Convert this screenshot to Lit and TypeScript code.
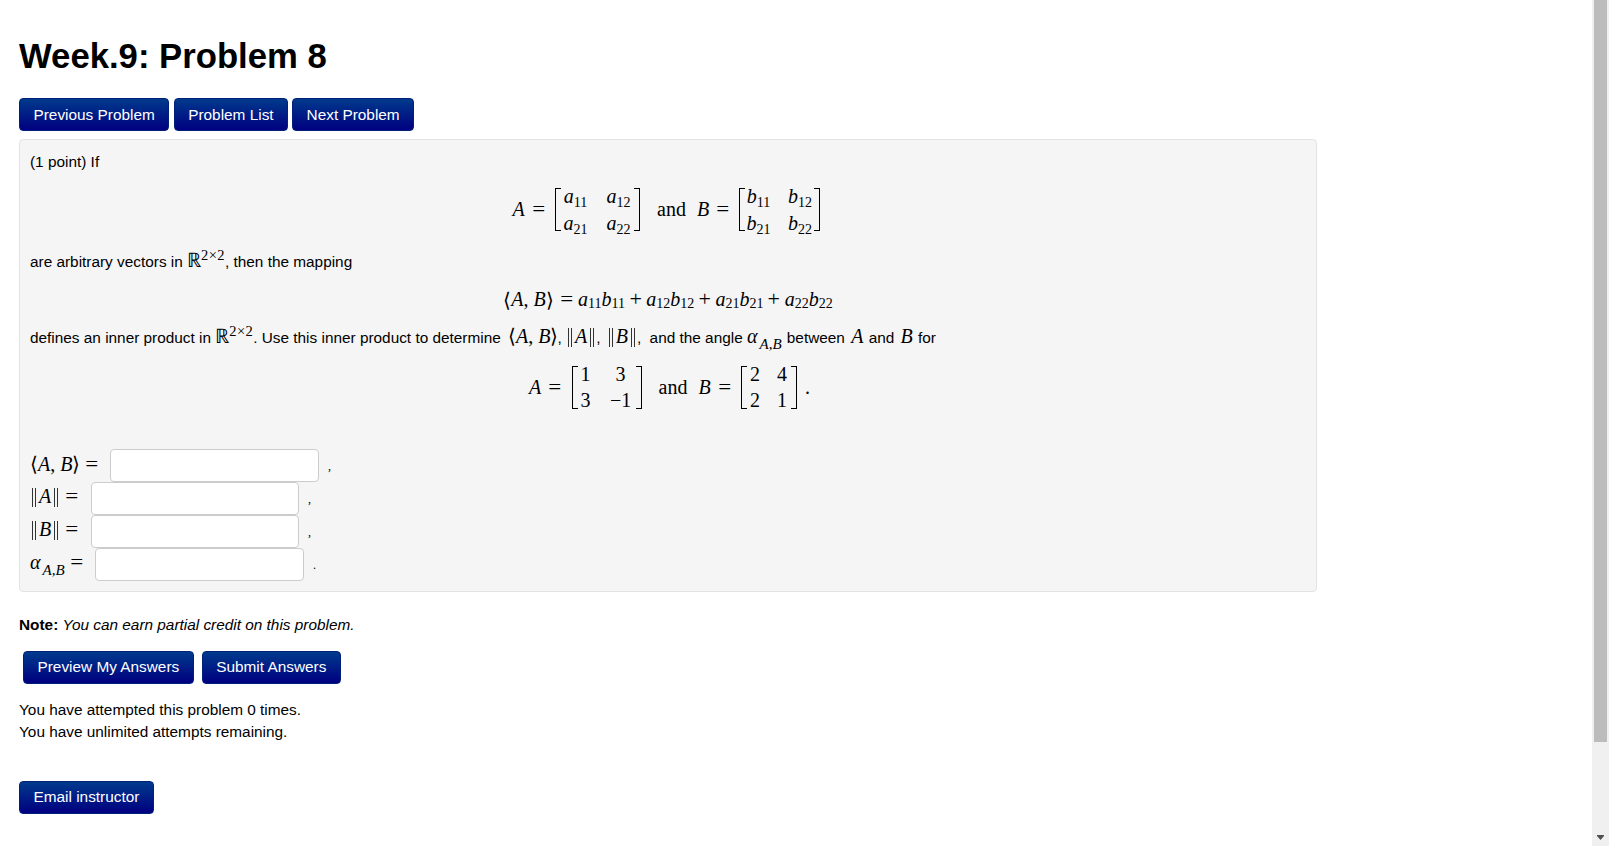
import { LitElement, html, css } from "lit";
import { customElement } from "lit/decorators.js";

const v = (s: string, sub = "") => html`<i>${s}</i>${sub ? html`<span class="sub">${sub}</span>` : ""}`;
const eq = html`<span class="eq">=</span>`;
const plus = html`<span class="plus">+</span>`;
const norm = html`<span class="norm"></span>`;
const req = html`<span class="req">=</span>`;

@customElement("app-root")
export class AppRoot extends LitElement {
  static styles = css`
    :host { display: flex; width: 1609px; height: 846px; overflow: hidden; background: #fff; color: #000; font-family: "Liberation Sans", Arial, sans-serif; font-size: 15.36px; }
    * { box-sizing: border-box; }
    main { flex: 1; min-width: 0; padding: 0 0 0 19px; display: flex; flex-direction: column; align-items: flex-start; }
    h1 { margin: 36px 0 0; font-size: 34.7px; line-height: 40px; font-weight: 700; height: 62px; }
    .btns { display: flex; gap: 4px; height: 33px; }
    .btn { display: flex; align-items: center; height: 33px; padding: 0 13.5px; border-radius: 4px; color: #fff; font-size: 15.36px; background: linear-gradient(#003a8c, #000080); border: 1px solid #00207a; white-space: nowrap; }
    .first { margin-right: 0.5px; }
    .box { width: 1298px; height: 453px; margin-top: 8px; padding: 0 10px; background: #f5f5f5; border: 1px solid #e3e3e3; border-radius: 4px; display: flex; flex-direction: column; }
    .line { white-space: nowrap; height: 21px; line-height: 21px; }
    .m { font-family: "Liberation Serif", serif; font-size: 20px; }
    .m i, .display i { font-style: italic; }
    .sub { font-size: 14px; position: relative; top: 4px; }
    .sub.ab { margin-left: 2px; top: 6px; font-size: 15px; }
    .sup { font-size: 14.5px; letter-spacing: 0.4px; position: relative; top: -7px; font-family: "Liberation Serif", serif; }
    .display { display: flex; justify-content: center; align-items: center; white-space: pre; font-family: "Liberation Serif", serif; font-size: 20px; }
    .eq { display: inline-block; margin: 0 11px 0 8px; transform: scaleX(1.15); }
    .plus { display: inline-block; margin: 0 5px; transform: scaleX(1.1); }
    .eq.tight { margin: 0 6px 0 7px; }
    .req { display: inline-block; margin-left: 6px; transform: scaleX(1.15); }
    .norm { display: inline-block; width: 4px; height: 19px; margin: 0 3px 0 2px; vertical-align: -4px; border-left: 1px solid #333; border-right: 1px solid #333; }
    .i i + .norm { margin: 0 2px 0 3px; }
    .ab1 { margin: 0 -1px 0 3px; }
    .na { margin-right: 2px; }
    .nb { margin-right: 4px; }
    .alpha { margin-right: 1px; }
    .gap2 { margin-left: 2px; margin-right: 1px; }
    .matrix { display: grid; position: relative; height: 43px; grid-template-rows: 27px 27px; align-content: center; align-items: center; justify-items: center; }
    .matrix::before, .matrix::after { content: ""; position: absolute; top: 0; bottom: 0; width: 5px; border: 1.3px solid #000; }
    .matrix::before { left: 0; border-right: 0; }
    .matrix::after { right: 0; border-left: 0; }
    .m1 { width: 85px; padding: 0 10px 0 9px; grid-template-columns: 23px 23px; column-gap: 20px; }
    .m2 { width: 81px; padding: 0 10px 0 9px; grid-template-columns: 20px 21px; column-gap: 21px; }
    .m3 { width: 70px; padding: 0 9px 0 6px; grid-template-rows: 26px 26px; grid-template-columns: 16px 24px; column-gap: 15px; }
    .m4 { width: 56px; padding: 0 6px; grid-template-rows: 26px 26px; grid-template-columns: 16px 16px; column-gap: 11px; }
    .and { padding: 0 11px 0 17px; }
    .period { margin-left: 8px; }
    .row { display: flex; align-items: center; height: 33px; white-space: nowrap; }
    .row .m { display: inline-block; margin-top: -4px; }
    input { display: block; height: 33px; border: 1px solid #ccc; border-radius: 4px; background: #fff; padding: 0; outline: 0; }
    .dot { font-family: "Liberation Serif", serif; font-size: 12px; margin-left: 9px; margin-top: 2px; color: #000; }
    .note { margin-top: 22px; height: 21px; line-height: 21px; }
    .actions { margin: 16px 0 0 4px; display: flex; gap: 8px; }
    .low { padding-bottom: 1px; }
    .status { margin-top: 15px; line-height: 22px; height: 44px; }
    .email { margin-top: 38px; }
    .sb { flex: 0 0 17px; width: 17px; height: 846px; background: #f0f0f0; padding-left: 2px; display: flex; flex-direction: column; justify-content: space-between; }
    .thumb { width: 13px; height: 742px; background: #bcbcbc; }
    .arrow { display: block; margin: 0 0 6px 3px; }
  `;

  render() {
    return html`
      <main>
        <h1>Week.9: Problem 8</h1>
        <div class="btns">
          <div class="btn first">Previous Problem</div>
          <div class="btn">Problem List</div>
          <div class="btn">Next Problem</div>
        </div>
        <div class="box">
          <div class="line" style="margin-top:11px">(1 point) If</div>
          <div class="display" style="height:67px;margin-top:4px;padding-right:3px">
            ${v("A")}${eq}<div class="matrix m1">
              <span>${v("a", "11")}</span><span>${v("a", "12")}</span>
              <span>${v("a", "21")}</span><span>${v("a", "22")}</span>
            </div><span class="and">and</span>${v("B")}${eq}<div class="matrix m2">
              <span>${v("b", "11")}</span><span>${v("b", "12")}</span>
              <span>${v("b", "21")}</span><span>${v("b", "22")}</span>
            </div>
          </div>
          <div class="line" style="margin-top:7px">are arbitrary vectors in <span class="m">ℝ</span><span class="sup">2×2</span>, then the mapping</div>
          <div class="display" style="height:43px;margin-top:7px">⟨${v("A")}, ${v("B")}⟩<span class="eq tight">=</span>${v("a", "11")}${v("b", "11")}${plus}${v("a", "12")}${v("b", "12")}${plus}${v("a", "21")}${v("b", "21")}${plus}${v("a", "22")}${v("b", "22")}</div>
          <div class="line" style="margin-top:5px">defines an inner product in <span class="m">ℝ</span><span class="sup">2×2</span>. Use this inner product to determine <span class="m ab1">⟨${v("A")}, ${v("B")}⟩</span>, <span class="m i">${norm}${v("A")}${norm}</span>,<span class="na"> </span><span class="m i">${norm}${v("B")}${norm}</span>,<span class="nb"> </span>and the angle <span class="m alpha">${v("α")}<span class="sub ab"><i>A,B</i></span></span> between <span class="m gap2">${v("A")}</span> and <span class="m gap2">${v("B")}</span> for</div>
          <div class="display" style="height:66px;margin-top:7px;padding-left:3px">
            ${v("A")}${eq}<div class="matrix m3">
              <span>1</span><span>3</span>
              <span>3</span><span>−1</span>
            </div><span class="and">and</span>${v("B")}${eq}<div class="matrix m4">
              <span>2</span><span>4</span>
              <span>2</span><span>1</span>
            </div><span class="period">.</span>
          </div>
          <div style="height:29px"></div>
          ${this.row(html`⟨${v("A")}, ${v("B")}⟩${req}`, 80, 209, ",")}
          ${this.row(html`<span class="i">${norm}${v("A")}${norm}</span>${req}`, 61, 208, ",")}
          ${this.row(html`<span class="i">${norm}${v("B")}${norm}</span>${req}`, 61, 208, ",")}
          ${this.row(html`${v("α")}<span class="sub ab"><i>A,B</i></span>${req}`, 65, 209, ".")}
        </div>
        <div class="note"><b>Note:</b> <em>You can earn partial credit on this problem.</em></div>
        <div class="actions">
          <div class="btn low">Preview My Answers</div>
          <div class="btn low">Submit Answers</div>
        </div>
        <div class="status">You have attempted this problem 0 times.<br />You have unlimited attempts remaining.</div>
        <div class="btn email low">Email instructor</div>
      </main>
      <div class="sb">
        <div class="thumb"></div>
        <svg class="arrow" width="7" height="5" viewBox="0 0 7 5"><path d="M0 0h7v1L3.5 5 0 1z" fill="#505050"></path></svg>
      </div>
    `;
  }

  private row(label: unknown, labelW: number, w: number, mark: string) {
    return html`<div class="row">
      <span class="m" style="width:${labelW}px">${label}</span>
      <input style="width:${w}px" aria-label="answer" />
      <span class="dot">${mark}</span>
    </div>`;
  }
}
